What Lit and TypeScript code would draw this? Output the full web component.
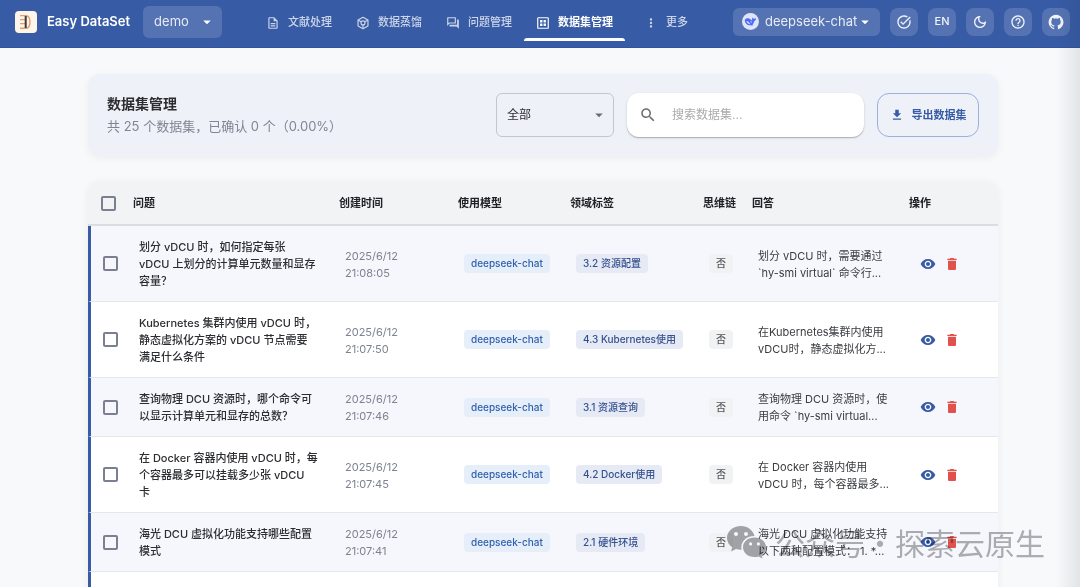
import { LitElement, html, svg, css, nothing } from "lit";
import { customElement, property } from "lit/decorators.js";

const ICONS: Record<string, string> = {
  doc: "M8 16h8v2H8zm0-4h8v2H8zm6-10H6c-1.1 0-2 .9-2 2v16c0 1.1.89 2 1.99 2H18c1.1 0 2-.9 2-2V8zm4 18H6V4h7v5h5z",
  chat: "M15 4v7H5.17L4 12.17V4zm1-2H3c-.55 0-1 .45-1 1v14l4-4h10c.55 0 1-.45 1-1V3c0-.55-.45-1-1-1m5 4h-2v9H6v2c0 .55.45 1 1 1h11l4 4V7c0-.55-.45-1-1-1",
  dataset: "M20 2H4a2 2 0 0 0-2 2v16a2 2 0 0 0 2 2h16a2 2 0 0 0 2-2V4a2 2 0 0 0-2-2m0 18H4V4h16zM7 7h4v4H7zm0 6h4v4H7zm6-6h4v4h-4zm0 6h4v4h-4z",
  more: "M12 8c1.1 0 2-.9 2-2s-.9-2-2-2-2 .9-2 2 .9 2 2 2m0 2c-1.1 0-2 .9-2 2s.9 2 2 2 2-.9 2-2-.9-2-2-2m0 6c-1.1 0-2 .9-2 2s.9 2 2 2 2-.9 2-2-.9-2-2-2",
  caret: "m7 10 5 5 5-5z",
  task: "M22 5.18 10.59 16.6l-4.24-4.24 1.41-1.41 2.83 2.83 10-10zm-2.21 5.04c.13.57.21 1.17.21 1.78 0 4.42-3.58 8-8 8s-8-3.58-8-8 3.58-8 8-8c1.58 0 3.04.46 4.28 1.25l1.44-1.44C16.1 2.67 14.13 2 12 2 6.48 2 2 6.48 2 12s4.48 10 10 10 10-4.48 10-10c0-1.19-.22-2.33-.6-3.39z",
  moon: "M9.37 5.51c-.18.64-.27 1.31-.27 1.99 0 4.08 3.32 7.4 7.4 7.4.68 0 1.35-.09 1.99-.27C17.45 17.19 14.93 19 12 19c-3.86 0-7-3.14-7-7 0-2.93 1.81-5.45 4.37-6.49M12 3c-4.97 0-9 4.03-9 9s4.03 9 9 9 9-4.03 9-9c0-.46-.04-.92-.1-1.36-.98 1.37-2.58 2.26-4.4 2.26-2.98 0-5.4-2.42-5.4-5.4 0-1.81.89-3.42 2.26-4.4-.44-.06-.9-.1-1.36-.1",
  help: "M11 18h2v-2h-2zm1-16C6.48 2 2 6.48 2 12s4.48 10 10 10 10-4.48 10-10S17.52 2 12 2m0 18c-4.41 0-8-3.59-8-8s3.59-8 8-8 8 3.59 8 8-3.59 8-8 8m0-14c-2.21 0-4 1.79-4 4h2c0-1.1.9-2 2-2s2 .9 2 2c0 2-3 1.75-3 5h2c0-2.25 3-2.5 3-5 0-2.21-1.79-4-4-4",
  github: "M12 1.27a11 11 0 00-3.48 21.46c.55.09.73-.28.73-.55v-1.84c-3.03.64-3.67-1.46-3.67-1.46-.55-1.29-1.28-1.65-1.28-1.65-.92-.65.1-.65.1-.65 1.1 0 1.73 1.1 1.73 1.1.92 1.65 2.57 1.2 3.21.92a2 2 0 01.64-1.47c-2.47-.27-5.04-1.19-5.04-5.5 0-1.1.46-2.1 1.2-2.84a3.76 3.76 0 010-2.93s.91-.28 3.11 1.1c1.8-.49 3.7-.49 5.5 0 2.1-1.38 3.02-1.1 3.02-1.1a3.76 3.76 0 01.1 2.93c.83.74 1.2 1.74 1.2 2.94 0 4.21-2.57 5.13-5.04 5.4.45.37.82.92.82 2.02v3.03c0 .27.1.64.73.55A11 11 0 0012 1.27",
  search: "M15.5 14h-.79l-.28-.27C15.41 12.59 16 11.11 16 9.5 16 5.91 13.09 3 9.5 3S3 5.91 3 9.5 5.91 16 9.5 16c1.61 0 3.09-.59 4.23-1.57l.27.28v.79l5 4.99L20.49 19zm-6 0C7.01 14 5 11.99 5 9.5S7.01 5 9.5 5 14 7.01 14 9.5 11.99 14 9.5 14",
  download: "M5 20h14v-2H5zM19 9h-4V3H9v6H5l7 7z",
  eye: "M12 4.5C7 4.5 2.73 7.61 1 12c1.73 4.39 6 7.5 11 7.5s9.27-3.11 11-7.5c-1.73-4.39-6-7.5-11-7.5M12 17c-2.76 0-5-2.24-5-5s2.24-5 5-5 5 2.24 5 5-2.24 5-5 5m0-8c-1.66 0-3 1.34-3 3s1.34 3 3 3 3-1.34 3-3-1.34-3-3-3",
  trash: "M6 19c0 1.1.9 2 2 2h8c1.1 0 2-.9 2-2V7H6zM19 4h-3.5l-1-1h-5l-1 1H5v2h14z",
};

@customElement("ui-icon")
class UiIcon extends LitElement {
  @property() name = "";
  @property({ type: Number }) size = 16;
  static styles = css`
    :host { display: inline-flex; flex: none; }
    svg { display: block; fill: currentColor; }
  `;
  render() {
    const token = svg`<g fill="none" stroke="currentColor" stroke-width="2" stroke-linejoin="round">
      <path d="M12 2.2 20.5 7v10L12 21.8 3.5 17V7z"/><circle cx="12" cy="11.8" r="3.4"/>
      <path d="M3.8 7.2 9 10M20.2 7.2 15 10M12 15.4v6"/></g>`;
    return html`<svg width=${this.size} height=${this.size} viewBox="0 0 24 24" aria-hidden="true">
      ${this.name === "token" ? token : svg`<path d=${ICONS[this.name] ?? ""}/>`}
    </svg>`;
  }
}

interface Row { q: string[]; time: string; tag: string; answer: string[]; }

const ROWS: Row[] = [
  { q: ["划分 vDCU 时，如何指定每张", "vDCU 上划分的计算单元数量和显存", "容量？"], time: "21:08:05", tag: "3.2 资源配置", answer: ["划分 vDCU 时，需要通过", "`hy-smi virtual` 命令行..."] },
  { q: ["Kubernetes 集群内使用 vDCU 时，", "静态虚拟化方案的 vDCU 节点需要", "满足什么条件"], time: "21:07:50", tag: "4.3 Kubernetes使用", answer: ["在Kubernetes集群内使用", "vDCU时，静态虚拟化方..."] },
  { q: ["查询物理 DCU 资源时，哪个命令可", "以显示计算单元和显存的总数？"], time: "21:07:46", tag: "3.1 资源查询", answer: ["查询物理 DCU 资源时，使", "用命令 `hy-smi virtual..."] },
  { q: ["在 Docker 容器内使用 vDCU 时，每", "个容器最多可以挂载多少张 vDCU", "卡"], time: "21:07:45", tag: "4.2 Docker使用", answer: ["在 Docker 容器内使用", "vDCU 时，每个容器最多..."] },
  { q: ["海光 DCU 虚拟化功能支持哪些配置", "模式"], time: "21:07:41", tag: "2.1 硬件环境", answer: ["海光 DCU 虚拟化功能支持", "以下两种配置模式： 1. *..."] },
];

const TABS = [
  ["doc", "文献处理"], ["token", "数据蒸馏"], ["chat", "问题管理"], ["dataset", "数据集管理"], ["more", "更多"],
];

const lines = (parts: string[]) => parts.map((p, i) => html`${i ? html`<br>` : nothing}${p}`);

@customElement("app-root")
class AppRoot extends LitElement {
  static styles = css`
    :host {
      display: block; position: relative; height: 100vh; overflow: hidden;
      background: #f8f9fb; color: #2b2d31;
      font: 400 11px/17px Inter, "Noto Sans CJK SC", sans-serif;
    }
    * { box-sizing: border-box; }
    button, select, input { font: inherit; color: inherit; margin: 0; }
    button { cursor: pointer; padding: 0; border: 0; background: none; }
    select { appearance: none; border: 0; outline: 0; background: none; cursor: pointer; }

    .bar {
      display: flex; align-items: center; justify-content: space-between;
      height: 48px; padding: 0 10px 4px 15px; background: #375ba5; color: #fff;
      border-bottom: 1px solid #3153a0;
    }
    .brand, .tools { display: flex; align-items: center; }
    .logo { display: block; width: 22px; height: 22px; margin-right: 10px; }
    .name { font-size: 13px; font-weight: 600; margin-right: 13px; white-space: nowrap; }
    .pick { position: relative; display: flex; align-items: center; background: #5573b3; border-radius: 6px; color: #e6ebf6; }
    .pick select { width: 100%; height: 100%; font-size: 13px; border-radius: 6px; }
    .pick ui-icon { position: absolute; right: 6px; pointer-events: none; color: #fff; }
    .project { width: 79px; height: 32px; }
    .project select { padding: 0 24px 0 11px; }
    .model { width: 147px; height: 28px; }
    .model select { padding: 0 16px 0 32px; }
    .model .whale { position: absolute; left: 9px; width: 17px; height: 17px; pointer-events: none; }
    .tools { gap: 10px; }
    .tool {
      display: flex; align-items: center; justify-content: center; width: 28px; height: 28px;
      border-radius: 8px; background: #5573b3; color: #f0f3fa; font-weight: 500;
    }
    nav { display: flex; margin-left: 6px; height: 41px; align-self: flex-start; }
    .tab {
      display: flex; align-items: center; justify-content: center; gap: 8px;
      padding: 4px 12px 0; color: #cdd6e9; text-decoration: none; font-weight: 500; white-space: nowrap;
    }
    .tab:last-child { min-width: 82px; }
    .tab.on { color: #fff; font-weight: 700; position: relative; }
    .tab.on::after {
      content: ""; position: absolute; left: 0; right: 0; bottom: 0; height: 3px;
      background: #fff; border-radius: 3px 3px 0 0;
    }

    main { padding: 26px 82px 0 88px; }
    .card {
      display: flex; align-items: center; gap: 13px; height: 82px; padding: 0 19px;
      background: #eef1f7; border-radius: 12px; box-shadow: 0 2px 8px rgba(0, 0, 0, .05);
    }
    .heading { flex: 1; }
    h1 { margin: 0; font-size: 14px; line-height: 22px; font-weight: 700; }
    .sum { margin: 0; font-size: 13px; line-height: 22px; color: #808594; }
    .filter { position: relative; display: flex; align-items: center; width: 118px; height: 44px; }
    .filter select {
      width: 100%; height: 100%; padding: 0 28px 2px 10px; font-size: 12px;
      border: 1px solid #c3c6cc; border-radius: 6px;
    }
    .filter ui-icon { position: absolute; right: 6px; color: #6a6c70; pointer-events: none; }
    .search {
      display: flex; align-items: center; gap: 15px; width: 237px; height: 44px; padding: 0 12px;
      background: #fff; border-radius: 12px; color: #6b6d70;
      box-shadow: 0 1px 1px rgba(0, 0, 0, .22), 0 1px 3px rgba(0, 0, 0, .1);
    }
    .search input { flex: 1; min-width: 0; height: 100%; padding: 0 0 2px; border: 0; outline: 0; background: none; font-size: 12px; }
    .search input::placeholder { color: #a9abae; opacity: 1; }
    .export {
      display: flex; align-items: center; justify-content: center; gap: 8px; width: 102px; height: 44px;
      border: 1px solid #9bb0dc; border-radius: 12px; color: #375ba5; font-weight: 600;
    }

    .sheet { margin-top: 25px; background: #fff; border-radius: 10px 10px 0 0; overflow: hidden; box-shadow: 0 2px 8px rgba(0, 0, 0, .06); }
    table { width: 100%; border-collapse: separate; border-spacing: 0; table-layout: fixed; }
    .c0 { width: 39px; } .c2 { width: 119px; } .c3 { width: 112px; } .c4 { width: 133px; }
    .c5 { width: 49px; } .c6 { width: 157px; } .c7 { width: 95px; }
    th {
      height: 45px; padding: 2px 0 0 6px; text-align: left; font-weight: 700; color: #202124;
      background: #f2f3f5; border-bottom: 2px solid #dcdde1; white-space: nowrap;
    }
    th:first-child { padding-left: 13px; }
    td { padding: 12px 0 12px 12px; border-bottom: 1px solid #e6e7ea; vertical-align: middle; }
    td:first-child { border-left: 3px solid #375ba5; }
    td:last-child { padding-left: 17px; }
    tbody tr:nth-child(odd) td { background: #f6f7fc; }
    tbody tr:nth-child(2n) td { background: #fff; }
    .rest td { height: 76px; }
    td.q, td.time, td.ans { padding-top: 13px; padding-bottom: 11px; white-space: nowrap; }
    .q { font-weight: 500; }
    .time { color: #7d8290; }
    .ans { color: #3a3c40; }
    input[type="checkbox"] {
      appearance: none; display: block; width: 15px; height: 15px;
      border: 2px solid #7b8091; border-radius: 2px; background: none;
    }
    .chip {
      display: block; width: fit-content; padding: 1px 7px; border-radius: 4px;
      font-size: 10px; font-weight: 500; white-space: nowrap;
    }
    .chip.model-chip { background: #e6eff9; color: #2f5fae; }
    .chip.tag { background: #e6eaf4; color: #35508f; }
    .chip.no { background: #f1f2f4; color: #55575b; }
    .acts { display: flex; gap: 8px; }
    .acts button { display: flex; }
    .view { color: #375ba5; } .acts .del { color: #e0524b; }

    .edge {
      position: absolute; inset: 0 0 0 auto; width: 24px; pointer-events: none;
      background: linear-gradient(to right, rgba(40, 44, 54, 0), rgba(40, 44, 54, .1));
    }
    .mark {
      position: absolute; right: 35px; bottom: 24px; display: flex; align-items: center; gap: 8px;
      pointer-events: none; mix-blend-mode: multiply; color: #b0b1b3;
      font: 400 30px/42px "Noto Sans CJK SC", sans-serif; white-space: pre;
    }
    .mark svg { display: block; width: 41px; height: 34px; }
  `;

  private renderRow(r: Row) {
    return html`<tr>
      <td><input type="checkbox" aria-label=${r.q.join("")}></td>
      <td class="q">${lines(r.q)}</td>
      <td class="time">${lines(["2025/6/12", r.time])}</td>
      <td><span class="chip model-chip">deepseek-chat</span></td>
      <td><span class="chip tag">${r.tag}</span></td>
      <td><span class="chip no">否</span></td>
      <td class="ans">${lines(r.answer)}</td>
      <td><div class="acts">
        <button class="view" aria-label="查看"><ui-icon name="eye" size="16"></ui-icon></button>
        <button class="del" aria-label="删除"><ui-icon name="trash" size="16"></ui-icon></button>
      </div></td>
    </tr>`;
  }

  render() {
    return html`
      <header class="bar">
        <div class="brand">
          <svg class="logo" viewBox="0 0 22 22" aria-hidden="true">
            <rect width="22" height="22" rx="4" fill="#fdf4ea"/>
            <g fill="none" stroke="#ee9a6c" stroke-width="1.4">
              <path d="M5 4.6h6.5a4.2 6.4 0 0 1 0 12.6H5M5 8.6h5M5 12.6h5"/>
            </g>
            <path d="M10.7 5v12" stroke="#3b3a3c" stroke-width="2"/>
          </svg>
          <span class="name">Easy DataSet</span>
          <div class="pick project">
            <select aria-label="项目"><option>demo</option></select>
            <ui-icon name="caret" size="18"></ui-icon>
          </div>
        </div>
        <nav>
          ${TABS.map(([icon, label], i) => html`<a class="tab ${i === 3 ? "on" : ""}" href="#" aria-current=${i === 3 ? "page" : nothing}>
            <ui-icon name=${icon} size="14"></ui-icon>${label}</a>`)}
        </nav>
        <div class="tools">
          <div class="pick model">
            <svg class="whale" viewBox="0 0 17 17" aria-hidden="true">
              <circle cx="8.5" cy="8.5" r="8.5" fill="#dfe5f5"/>
              <path fill="#4d6bfe" d="M2.8 7c.8-1.700 2.600-2.200 4.300-1.500 1.200.5 1.900 1.500 3 1.800.2-.9-.2-1.900.2-2.700.5.900 1.200 1.200 2.100 1.100.7 0 1.100-.5 1.700-.3-.1 1.400-.8 2.200-1.900 2.500-.1 1.500-.7 2.600-1.700 3.500l.9.7c-.9.5-1.900.3-2.700.1C5.500 12.600 2.800 10.500 2.800 7z"/>
              <path fill="#dfe5f5" d="M4.400 8c1.800 0 2.700 1.500 4 3.200C6.500 11.100 4.700 10 4.400 8zM8.300 8.400c.8-.2 1.500.3 1.700 1.200-.8.100-1.400-.4-1.700-1.200z"/>
            </svg>
            <select aria-label="模型"><option>deepseek-chat</option></select>
            <ui-icon name="caret" size="18"></ui-icon>
          </div>
          <button class="tool" aria-label="任务"><ui-icon name="task" size="16"></ui-icon></button>
          <button class="tool">EN</button>
          <button class="tool" aria-label="主题"><ui-icon name="moon" size="16"></ui-icon></button>
          <button class="tool" aria-label="帮助"><ui-icon name="help" size="16"></ui-icon></button>
          <button class="tool" aria-label="GitHub"><ui-icon name="github" size="16"></ui-icon></button>
        </div>
      </header>
      <main>
        <section class="card">
          <div class="heading">
            <h1>数据集管理</h1>
            <p class="sum">共 25 个数据集，已确认 0 个（0.00%）</p>
          </div>
          <div class="filter">
            <select aria-label="筛选"><option>全部</option></select>
            <ui-icon name="caret" size="18"></ui-icon>
          </div>
          <label class="search">
            <ui-icon name="search" size="18"></ui-icon>
            <input type="text" placeholder="搜索数据集..." aria-label="搜索数据集">
          </label>
          <button class="export"><ui-icon name="download" size="14"></ui-icon>导出数据集</button>
        </section>
        <div class="sheet">
          <table>
            <colgroup>
              <col class="c0"><col class="c1"><col class="c2"><col class="c3"><col class="c4"><col class="c5"><col class="c6"><col class="c7">
            </colgroup>
            <thead><tr>
              <th><input type="checkbox" aria-label="全选"></th>
              <th>问题</th><th>创建时间</th><th>使用模型</th><th>领域标签</th><th>思维链</th><th>回答</th><th>操作</th>
            </tr></thead>
            <tbody>
              ${ROWS.map((r) => this.renderRow(r))}
              <tr class="rest"><td></td><td colspan="7"></td></tr>
            </tbody>
          </table>
        </div>
      </main>
      <div class="mark">
        <svg viewBox="0 0 41 34" aria-hidden="true">
          <path fill="#a6a7a9" fill-rule="evenodd" d="M15 1C7 1 1 6 1 13c0 4 2 7 5.300 9.300L5 26.500l5-2.500c1.800.5 3.600.8 5.600.7C14 17 20 11 28.500 11 27 5 21.500 1 15 1zM10 7a2 2 0 1 1 0 4 2 2 0 0 1 0-4zm10 0a2 2 0 1 1 0 4 2 2 0 0 1 0-4z"/>
          <path fill="#a6a7a9" fill-rule="evenodd" d="M28.500 12.500c-6.500 0-11.500 4.200-11.500 9.700s5 9.800 11.500 9.800c1.400 0 2.800-.2 4-.6l4 2.100-1-3.500c2.800-1.800 4.500-4.600 4.500-7.800 0-5.500-5-9.700-11.500-9.700zM24.600 17.300a1.600 1.600 0 1 1 0 3.200 1.600 1.600 0 0 1 0-3.200zm7.800 0a1.600 1.600 0 1 1 0 3.200 1.600 1.600 0 0 1 0-3.200z"/>
        </svg>
        <span>公众号·探索云原生</span>
      </div>
      <div class="edge"></div>
    `;
  }
}
